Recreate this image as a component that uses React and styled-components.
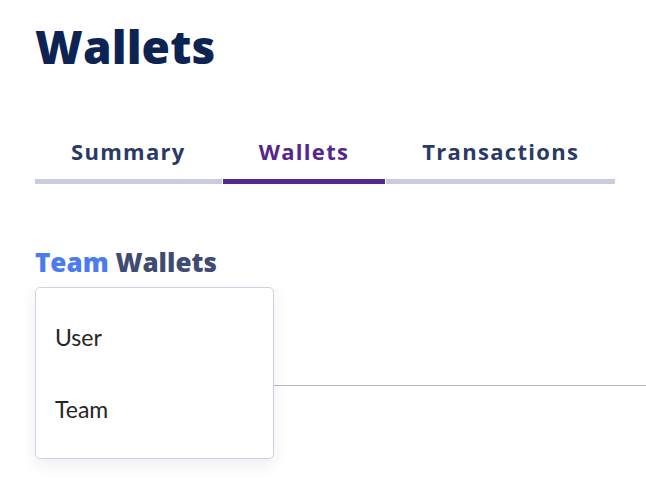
import React from 'react';
import styled, { createGlobalStyle } from 'styled-components';

const GlobalStyle = createGlobalStyle`
  body {
    margin: 0;
    background: #ffffff;
    font-family: 'Lato', 'Noto Sans', sans-serif;
  }
`;

const Page = styled.div`
  min-height: 100vh;
  box-sizing: border-box;
  padding: 19px 0 0 35px;
`;

const Heading = styled.h1`
  margin: 0;
  font-family: 'Open Sans', 'Lato', sans-serif;
  font-size: 46px;
  font-weight: 800;
  line-height: 54px;
  color: #0d2352;
  letter-spacing: 0.1px;
`;

const Tabs = styled.div`
  display: flex;
  gap: 1px;
  margin-top: 64px;
`;

const Tab = styled.div`
  padding: 0 36px 14px;
  font-family: 'Open Sans', 'Lato', sans-serif;
  font-size: 22px;
  font-weight: 700;
  line-height: 28px;
  letter-spacing: 1.3px;
  color: ${(p) => (p.$active ? '#54268f' : '#293a66')};
  border-bottom: 5px solid ${(p) => (p.$active ? '#54268f' : '#c8ccdc')};
`;

const SectionTitle = styled.h2`
  margin: 63px 0 0;
  font-family: 'Open Sans', 'Lato', sans-serif;
  font-size: 26px;
  font-weight: 800;
  line-height: 30px;
  letter-spacing: 0;
  color: #3f4b73;
`;

const Accent = styled.span`
  color: #4a7cf0;
`;

const SelectArea = styled.div`
  position: relative;
  height: 108px;
  border-bottom: 1px solid #b4b8c4;
`;

const Menu = styled.div`
  position: absolute;
  top: 10px;
  left: 0;
  z-index: 2;
  width: 237px;
  padding: 13px 0;
  background: #ffffff;
  border: 1px solid #cfd1e2;
  border-radius: 5px;
  box-shadow: 0 6px 16px rgba(30, 40, 80, 0.08);
`;

const MenuItem = styled.div`
  display: flex;
  align-items: center;
  height: 72px;
  padding-left: 19px;
  font-size: 23px;
  color: #262626;
`;

export default function App() {
  return (
    <>
      <GlobalStyle />
      <Page>
        <Heading>Wallets</Heading>
        <Tabs>
          <Tab>Summary</Tab>
          <Tab $active>Wallets</Tab>
          <Tab>Transactions</Tab>
        </Tabs>
        <SectionTitle>
          <Accent>Team</Accent> Wallets
        </SectionTitle>
        <SelectArea>
          <Menu>
            <MenuItem>User</MenuItem>
            <MenuItem>Team</MenuItem>
          </Menu>
        </SelectArea>
      </Page>
    </>
  );
}
